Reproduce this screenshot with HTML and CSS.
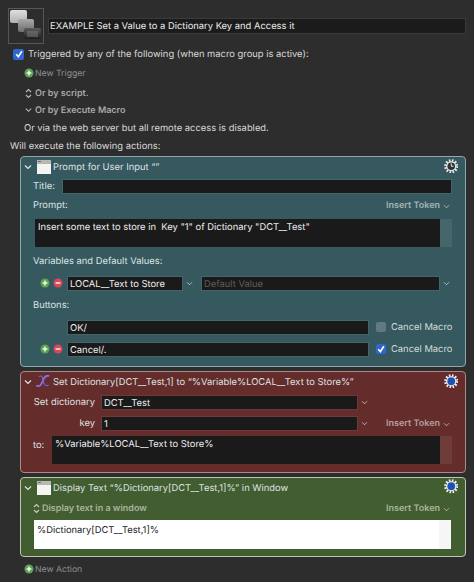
FILE: index.html
```html
<!DOCTYPE html>
<html lang="en">
<head>
<meta charset="utf-8">
<title>Keyboard Maestro macro</title>
<link rel="stylesheet" href="styles.css">
</head>
<body>
<svg class="defs" width="0" height="0" aria-hidden="true">
  <defs>
    <symbol id="plus" viewBox="0 0 10 10"><circle cx="5" cy="5" r="4.5" fill="#5aa351"/><path d="M5 2.6v4.8M2.6 5h4.8" stroke="#f2f7ef" stroke-width="1.5"/></symbol>
    <symbol id="minus" viewBox="0 0 10 10"><circle cx="5" cy="5" r="4.5" fill="#d9475a"/><path d="M2.6 5h4.8" stroke="#f7eef0" stroke-width="1.5"/></symbol>
    <symbol id="chev" viewBox="0 0 8 6"><path d="M1 1.5 4 4.5 7 1.5" fill="none" stroke="currentColor" stroke-width="1.2"/></symbol>
    <symbol id="updown" viewBox="0 0 7 11"><path d="M1 4 3.5 1.5 6 4M1 7 3.5 9.5 6 7" fill="none" stroke="currentColor" stroke-width="1.1"/></symbol>
    <symbol id="doc" viewBox="0 0 14 14"><rect width="14" height="14" fill="#f4f4f0"/><rect width="14" height="3" fill="#b9b9b4"/><rect x="1" y="1" width="3" height="1" fill="#6d6d6d"/><path d="M0 3.500h14" stroke="#8b8b87" stroke-width=".6"/></symbol>
    <symbol id="gear-blue" viewBox="0 0 16 16"><circle cx="8" cy="8" r="6.4" fill="none" stroke="#eef0f4" stroke-width="3" stroke-dasharray="1.7 1.65"/><circle cx="8" cy="8" r="5.6" fill="#eef0f4"/><circle cx="8" cy="8" r="4.3" fill="#1f50b4"/></symbol>
    <symbol id="gear-clock" viewBox="0 0 16 16"><circle cx="8" cy="8" r="6.4" fill="none" stroke="#e6e8e6" stroke-width="3" stroke-dasharray="1.7 1.65"/><circle cx="8" cy="8" r="5.6" fill="#e6e8e6"/><circle cx="8" cy="8" r="4.2" fill="#2b3336"/><path d="M8 4.800V8h2.600" fill="none" stroke="#e6e8e6" stroke-width="1.1"/></symbol>
  </defs>
</svg>

<header class="macro-head">
  <div class="macro-icon">
    <svg viewBox="0 0 34 34" width="34" height="34">
      <defs>
        <linearGradient id="g1" x1="0" y1="0" x2="0" y2="1"><stop offset="0" stop-color="#dedede"/><stop offset="1" stop-color="#b0b0b0"/></linearGradient>
        <linearGradient id="g2" x1="0" y1="0" x2="0" y2="1"><stop offset="0" stop-color="#a8a8a8"/><stop offset="1" stop-color="#6e6e6e"/></linearGradient>
        <linearGradient id="g3" x1="0" y1="0" x2="0" y2="1"><stop offset="0" stop-color="#5c5c5c"/><stop offset="1" stop-color="#1e1e1e"/></linearGradient>
      </defs>
      <rect x="1" y="1" width="17" height="13" rx="2" fill="url(#g1)"/>
      <rect x="9" y="10" width="16" height="13" rx="2" fill="url(#g2)"/>
      <rect x="15" y="19" width="17" height="11" rx="2" fill="url(#g3)"/>
      <rect x="18" y="22" width="11" height="6" fill="#888" opacity=".45"/>
    </svg>
  </div>
  <div class="macro-title">EXAMPLE Set a Value to a Dictionary Key and Access it</div>
</header>

<div class="row trigger-row">
  <span class="check on"><svg viewBox="0 0 10 10" width="10" height="10"><path d="M2.2 5.2 4.3 7.6 7.9 2.2" fill="none" stroke="#fff" stroke-width="1.6"/></svg></span>
  <span>Triggered by any of the following (when macro group is active):</span>
</div>
<div class="row add-row new-trigger"><svg class="ic9"><use href="#plus"/></svg><span>New Trigger</span></div>
<div class="row or-row or-script"><svg class="disc"><use href="#updown"/></svg><span>Or by script.</span></div>
<div class="row or-row or-exec"><svg class="disc chev-small"><use href="#chev"/></svg><span>Or by Execute Macro</span></div>
<div class="row plain via-row">Or via the web server but all remote access is disabled.</div>
<div class="row plain will-row">Will execute the following actions:</div>

<section class="card teal">
  <div class="card-head">
    <svg class="head-chev"><use href="#chev"/></svg>
    <svg class="head-doc"><use href="#doc"/></svg>
    <span class="head-title">Prompt for User Input “”</span>
    <svg class="gear"><use href="#gear-clock"/></svg>
  </div>
  <div class="row t-title"><span class="t-label">Title:</span><div class="field grow"></div></div>
  <div class="row t-prompt"><span>Prompt:</span><span class="token">Insert Token<svg class="tchev"><use href="#chev"/></svg></span></div>
  <div class="textbox dark t-box"><div class="textbox-main">Insert some text to store in&nbsp; Key "1" of Dictionary "DCT__Test"</div><div class="textbox-scroll"></div></div>
  <div class="row plain t-vars">Variables and Default Values:</div>
  <div class="row t-var-row">
    <svg class="ic9 pm"><use href="#plus"/></svg><svg class="ic9 pm"><use href="#minus"/></svg>
    <div class="field var-name">LOCAL__Text to Store</div><svg class="fchev"><use href="#chev"/></svg>
    <div class="field var-default">Default Value</div><svg class="fchev"><use href="#chev"/></svg>
  </div>
  <div class="row plain t-buttons">Buttons:</div>
  <div class="row t-btn first">
    <div class="field btn-field">OK/</div>
    <span class="check off"></span><span class="cancel">Cancel Macro</span>
  </div>
  <div class="row t-btn second">
    <svg class="ic9 pm"><use href="#plus"/></svg><svg class="ic9 pm"><use href="#minus"/></svg>
    <div class="field btn-field">Cancel/.</div>
    <span class="check on"><svg viewBox="0 0 10 10" width="10" height="10"><path d="M2.2 5.2 4.3 7.6 7.9 2.2" fill="none" stroke="#fff" stroke-width="1.6"/></svg></span><span class="cancel">Cancel Macro</span>
  </div>
</section>

<section class="card red">
  <div class="card-head">
    <svg class="head-chev"><use href="#chev"/></svg>
    <svg class="head-x" viewBox="0 0 14 12"><path d="M.7 10c.5 1.300 2.300 1.600 3.600.4C6 8.800 6.800 5.500 8.200 3 9.200 1.200 11 .4 13.300 1" fill="none" stroke="#8a70e0" stroke-width="1.800"/><path d="M2.600 1.600C4.400.4 6 1 6.500 3c.5 2 .8 4.500 1.800 6.300.9 1.500 2.800 1.800 4.400.7" fill="none" stroke="#7c62d6" stroke-width="1.100"/></svg>
    <span class="head-title">Set Dictionary[DCT__Test,1] to “%Variable%LOCAL__Text to Store%”</span>
    <svg class="gear"><use href="#gear-blue"/></svg>
  </div>
  <div class="row r-dict"><span class="r-label">Set dictionary</span><div class="field r-field">DCT__Test</div><svg class="fchev"><use href="#chev"/></svg></div>
  <div class="row r-key"><span class="r-label">key</span><div class="field r-field">1</div><svg class="fchev"><use href="#chev"/></svg><span class="token">Insert Token<svg class="tchev"><use href="#chev"/></svg></span></div>
  <div class="r-to"><span class="to-label">to:</span><div class="textbox dark r-box"><div class="textbox-main">%Variable%LOCAL__Text to Store%</div><div class="textbox-scroll"></div></div></div>
</section>

<section class="card green">
  <div class="card-head">
    <svg class="head-chev"><use href="#chev"/></svg>
    <svg class="head-doc"><use href="#doc"/></svg>
    <span class="head-title">Display Text “%Dictionary[DCT__Test,1]%” in Window</span>
    <svg class="gear"><use href="#gear-blue"/></svg>
  </div>
  <div class="row g-mode"><svg class="disc"><use href="#updown"/></svg><span class="g-mode-label">Display text in a window</span><span class="token">Insert Token<svg class="tchev"><use href="#chev"/></svg></span></div>
  <div class="textbox light g-box"><div class="textbox-main">%Dictionary[DCT__Test,1]%</div><div class="textbox-scroll"></div></div>
</section>

<div class="row add-row new-action"><svg class="ic9"><use href="#plus"/></svg><span>New Action</span></div>
</body>
</html>
```
FILE: styles.css
```css
* { box-sizing: border-box; }
html, body { margin: 0; padding: 0; }
body {
  width: 474px;
  height: 582px;
  overflow: hidden;
  background: #2d2d2d;
  color: #d9d9d9;
  font-family: Inter, "Liberation Sans", sans-serif;
  font-size: 9.4px;
  line-height: 14px;
  text-rendering: geometricPrecision;
}
.defs { position: absolute; }
svg { display: block; flex: none; }

.row { display: flex; align-items: center; height: 14px; white-space: nowrap; }
.row.plain { padding-top: 2px; }
.row > span:not(.check) { padding-top: 2px; }

.macro-head { display: flex; margin: 8px 9px 0 8px; height: 36px; }
.macro-icon { width: 36px; height: 36px; border: 1px solid #565656; }
.macro-title {
  margin: 11px 0 0 5px;
  flex: 1;
  height: 14px;
  line-height: 16px;
  padding-left: 1px;
  background: #1b1b1b;
  color: #ececec;
  box-shadow: 0 0 0 1px #3a3a3a;
}

.check {
  width: 11px; height: 11px;
  border-radius: 2px;
  display: flex; align-items: center; justify-content: center;
  flex: none;
}
.check.on { background: #2f66d0; }
.check.off { background: #5f7b80; }
.ic9 { width: 10px; height: 10px; }

.trigger-row { margin: 3px 0 0 13px; gap: 4px; }
.new-trigger { margin-top: 5px; }
.add-row { margin-left: 24px; gap: 1px; color: #8d8d8d; font-size: 8.7px; }
.or-row { margin-left: 25px; font-weight: 600; color: #a8a8a8; gap: 3px; font-size: 9px; }
.or-script { margin-top: 6px; }
.or-exec { margin-top: 3px; }
.disc { width: 7px; height: 11px; color: #bcbcbc; }
.chev-small { height: 6px; }
.via-row { margin: 4px 0 0 24px; }
.will-row { margin: 4px 0 0 10px; }

.card {
  margin: 0 0 0 20px;
  width: 446px;
  padding: 0 13px 0 12px;
  border: 1px solid;
  border-radius: 4px;
  color: #dde3e3;
}
.teal { margin-top: 3px; background: #36595f; border-color: #8ea7aa; padding-bottom: 10px; }
.red { margin-top: 4px; background: #642c2a; border-color: #a98a86; padding-bottom: 8px; }
.green { margin-top: 4px; background: #425d2f; border-color: #bcc8b2; padding-bottom: 7px; }

.card-head { display: flex; align-items: center; height: 20px; margin: 0 -6px 0 -9px; }
.green .card-head { height: 19px; }
.head-chev { width: 8px; height: 6px; color: #dfe5e5; }
.head-doc { width: 14px; height: 14px; margin-left: 5px; }
.head-x { width: 14px; height: 12px; margin-left: 4px; margin-bottom: 2px; }
.red .head-title { margin-left: 3px; }
.head-title { margin-left: 2px; flex: 1; white-space: nowrap; padding-top: 2px; }
.gear { width: 14.5px; height: 14.5px; margin-bottom: 2px; }

.field {
  height: 13px;
  line-height: 15px;
  padding-left: 2px;
  background: #1a1a1a;
  color: #f0f0f0;
  box-shadow: 0 0 0 1px rgba(255,255,255,.07);
  flex: none;
}
.grow { flex: 1; }
.token {
  margin-left: auto;
  display: flex; align-items: center; gap: 3px;
  padding-right: 2px;
  font-weight: 600;
  font-size: 9px;
  color: rgba(255,255,255,.55);
}
.tchev { width: 7px; height: 5px; }
.fchev { width: 7px; height: 5px; margin-left: 4px; color: rgba(255,255,255,.6); }

.t-title { margin-top: 2px; margin-right: 1px; }
.t-label { width: 30px; }
.t-prompt { margin-top: 5px; }
.textbox { display: flex; height: 28px; }
.textbox-main { flex: 1; padding: 2px 3px; }
.textbox-scroll { width: 12px; }
.dark .textbox-main { background: #1a1a1a; color: #eee; }
.dark .textbox-scroll { background: rgba(255,255,255,.08); }
.light { background: #fff; }
.light .textbox-main { color: #222; padding-top: 4px; }
.light .textbox-scroll { background: #f6f6f6; }
.t-box { margin: 7px 0 0 2px; }
.t-vars { margin-top: 7px; }
.t-var-row { margin: 8px 0 0 7px; }
.pm { margin-right: 3px; }
.pm + .field { margin-left: 2px; }
.var-name { width: 114px; }
.var-default { width: 237px; margin-left: 9px; color: #5c5c5c; }
.t-buttons { margin-top: 8px; }
.t-btn { margin-top: 8px; }
.t-btn.first { padding-left: 35px; }
.t-btn.second { padding-left: 7px; }
.btn-field { width: 300px; }
.t-btn .check { margin-left: 8px; width: 10px; height: 10px; }
.cancel { margin-left: 5px; color: #d3dcdc; }

.r-dict { margin-top: 3px; }
.r-key { margin-top: 7px; }
.r-label { width: 62px; text-align: right; }
.r-field { width: 255px; margin-left: 7px; }
.r-to { display: flex; margin-top: 6px; }
.to-label { width: 19px; padding-top: 3px; }
.r-box { flex: 1; }

.g-mode { margin-top: 4px; font-weight: 600; font-size: 9px; color: rgba(255,255,255,.55); }
.g-mode-label { margin-left: 2px; }
.g-mode .disc { color: rgba(255,255,255,.7); }
.g-box { margin: 5px 1px 0 1px; height: 29px; }

.new-action { margin-top: 5px; margin-left: 24px; }
```
